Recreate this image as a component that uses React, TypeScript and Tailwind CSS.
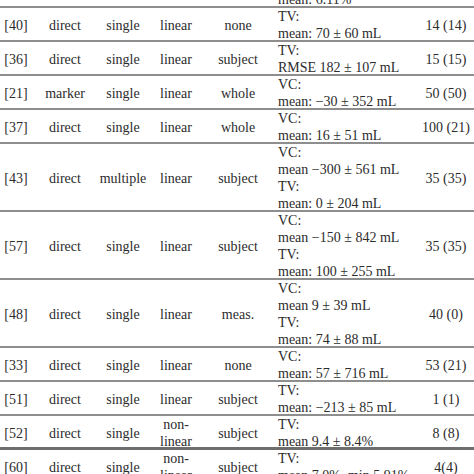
type Row = {
  ref: string;
  method: string;
  cams: string;
  model: string[];
  calib: string;
  result: string[];
  n: string;
  tall?: boolean;
  thick?: boolean;
};

const rows: Row[] = [
  { ref: '[40]', method: 'direct', cams: 'single', model: ['linear'], calib: 'none', result: ['TV:', 'mean: 70 ± 60 mL'], n: '14 (14)' },
  { ref: '[36]', method: 'direct', cams: 'single', model: ['linear'], calib: 'subject', result: ['TV:', 'RMSE 182 ± 107 mL'], n: '15 (15)' },
  { ref: '[21]', method: 'marker', cams: 'single', model: ['linear'], calib: 'whole', result: ['VC:', 'mean: −30 ± 352 mL'], n: '50 (50)' },
  { ref: '[37]', method: 'direct', cams: 'single', model: ['linear'], calib: 'whole', result: ['VC:', 'mean: 16 ± 51 mL'], n: '100 (21)' },
  {
    ref: '[43]', method: 'direct', cams: 'multiple', model: ['linear'], calib: 'subject',
    result: ['VC:', 'mean −300 ± 561 mL', 'TV:', 'mean: 0 ± 204 mL'], n: '35 (35)', tall: true,
  },
  {
    ref: '[57]', method: 'direct', cams: 'single', model: ['linear'], calib: 'subject',
    result: ['VC:', 'mean −150 ± 842 mL', 'TV:', 'mean: 100 ± 255 mL'], n: '35 (35)', tall: true,
  },
  {
    ref: '[48]', method: 'direct', cams: 'single', model: ['linear'], calib: 'meas.',
    result: ['VC:', 'mean 9 ± 39 mL', 'TV:', 'mean: 74 ± 88 mL'], n: '40 (0)', tall: true,
  },
  { ref: '[33]', method: 'direct', cams: 'single', model: ['linear'], calib: 'none', result: ['VC:', 'mean: 57 ± 716 mL'], n: '53 (21)' },
  { ref: '[51]', method: 'direct', cams: 'single', model: ['linear'], calib: 'subject', result: ['TV:', 'mean: −213 ± 85 mL'], n: '1 (1)' },
  { ref: '[52]', method: 'direct', cams: 'single', model: ['non-', 'linear'], calib: 'subject', result: ['TV:', 'mean 9.4 ± 8.4%'], n: '8 (8)', thick: true },
  { ref: '[60]', method: 'direct', cams: 'single', model: ['non-', 'linear'], calib: 'subject', result: ['TV:', 'mean 7.0%, min 5.91%'], n: '4(4)' },
];

function TableRow({ row }: { row: Row }) {
  const h = row.tall ? 'h-[68px]' : 'h-[34px]';
  const line = row.thick ? 'border-b-[3px] border-[#6e6e6e]' : 'border-b-2 border-[#8e8e8e]';
  return (
    <div className={`grid grid-cols-[32px_66px_50px_56px_68px_146px_56px] items-center shrink-0 ${h} ${line}`}>
      <div className="text-center">{row.ref}</div>
      <div className="text-center">{row.method}</div>
      <div className="text-center">{row.cams}</div>
      <div className="text-center">
        {row.model.map((m, i) => (
          <div key={i}>{m}</div>
        ))}
      </div>
      <div className="text-center">{row.calib}</div>
      <div className="pl-[6px] whitespace-nowrap">
        {row.result.map((r, i) => (
          <div key={i}>{r}</div>
        ))}
      </div>
      <div className="text-center">{row.n}</div>
    </div>
  );
}

export default function App() {
  return (
    <div className="h-[474px] w-[474px] overflow-hidden bg-white font-['Liberation_Serif',serif] text-[14px] leading-[17px] text-[#2c2c2c]">
      <div className="flex flex-col">
        {/* row cut off at the top */}
        <div className="grid grid-cols-[32px_66px_50px_56px_68px_146px_56px] items-center shrink-0 h-[34px] -mt-[26px] border-b-2 border-[#8e8e8e]">
          <div />
          <div />
          <div />
          <div />
          <div />
          <div className="pl-[6px] whitespace-nowrap">
            <div>TV:</div>
            <div>mean: 6.11%</div>
          </div>
          <div />
        </div>
        {rows.map(row => (
          <TableRow key={row.ref} row={row} />
        ))}
      </div>
    </div>
  );
}
